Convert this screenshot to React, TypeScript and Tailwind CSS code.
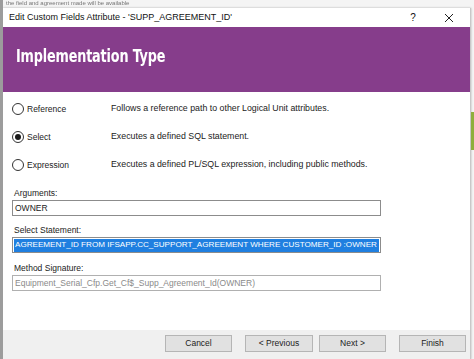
import React from "react";

const rows = [
  { label: "Reference", desc: "Follows a reference path to other Logical Unit attributes.", checked: false },
  { label: "Select", desc: "Executes a defined SQL statement.", checked: true },
  { label: "Expression", desc: "Executes a defined PL/SQL expression, including public methods.", checked: false },
];

function Radio({ checked }: { checked: boolean }) {
  return (
    <span className="w-[12px] h-[12px] rounded-full border border-[#333] bg-white flex items-center justify-center shrink-0">
      {checked && <span className="w-[6px] h-[6px] rounded-full bg-[#1a1a1a]" />}
    </span>
  );
}

function Btn({ children, className = "" }: { children: React.ReactNode; className?: string }) {
  return (
    <div
      className={
        "h-[17px] flex items-center justify-center bg-[#e1e1e1] border border-[#b5b5b5] text-[8.5px] text-[#222] " +
        className
      }
    >
      {children}
    </div>
  );
}

export default function App() {
  return (
    <div
      className="w-[474px] h-[359px] overflow-hidden bg-[#f4f4f4] relative"
      style={{ fontFamily: "'Liberation Sans', Arial, sans-serif" }}
    >
      {/* blurred text of the window behind */}
      <div className="absolute left-[6px] top-0 text-[6px] leading-[7px] text-[#777] blur-[0.5px]">
        the field and agreement made will be available
      </div>
      <div className="absolute left-0 top-0 w-[3px] h-[359px] bg-[#9c9c9c]" />
      <div className="absolute right-0 top-[112px] w-[3px] h-[38px] bg-[#8fae3c]" />

      <div className="ml-[3px] mt-[8px] w-[468px] h-[351px] flex flex-col border-r border-[#c8c8c8] shadow-[0_0_2px_rgba(0,0,0,0.3)]">
        {/* title bar */}
        <div className="h-[19px] bg-white flex items-center pl-[6px] text-[9px] text-[#111]">
          <span className="flex-1">Edit Custom Fields Attribute - 'SUPP_AGREEMENT_ID'</span>
          <span className="w-[10px] text-center mr-[26px] text-[10px]">?</span>
          <svg width="10" height="10" viewBox="0 0 10 10" className="mr-[16px]">
            <path d="M1 1 L9 9 M9 1 L1 9" stroke="#222" strokeWidth="1" />
          </svg>
        </div>

        {/* header */}
        <div className="h-[65px] bg-[#863d8b] flex items-center pl-[13px] pb-[8px]">
          <span
            className="inline-block origin-left scale-x-[0.79] text-white font-bold text-[18px] tracking-[-0.2px]"
            style={{ fontFamily: "'DejaVu Sans Condensed', 'Liberation Sans', sans-serif" }}
          >
            Implementation Type
          </span>
        </div>

        {/* body */}
        <div className="flex-1 bg-white pt-[9px] pl-[9px] text-[8.5px] text-[#222]">
          <div className="flex flex-col gap-[12px]">
            {rows.map((r) => (
              <div key={r.label} className="h-[16px] flex items-center">
                <Radio checked={r.checked} />
                <span className="ml-[3px] w-[84px]">{r.label}</span>
                <span className="text-[8.8px]">{r.desc}</span>
              </div>
            ))}
          </div>

          <div className="mt-[13px] h-[14px] flex items-center pl-[2px]">Arguments:</div>
          <div className="w-[369px] h-[16px] border border-[#8c8c8c] flex items-center pl-[2px]">OWNER</div>

          <div className="mt-[7px] h-[14px] flex items-center pl-[2px]">Select Statement:</div>
          <div className="w-[369px] h-[16px] border border-[#8c8c8c] flex items-center px-[1px] overflow-hidden">
            <span className="bg-[#1f7fe0] text-white whitespace-nowrap pl-[1px] h-[13px] flex items-center w-full text-[8.1px]">
              AGREEMENT_ID FROM IFSAPP.CC_SUPPORT_AGREEMENT WHERE CUSTOMER_ID :OWNER
            </span>
          </div>

          <div className="mt-[8px] h-[14px] flex items-center pl-[2px]">Method Signature:</div>
          <div className="w-[369px] h-[16px] border border-[#b0b0b0] flex items-center pl-[2px] text-[#8a8a8a]">
            Equipment_Serial_Cfp.Get_Cf$_Supp_Agreement_Id(OWNER)
          </div>
        </div>

        {/* footer */}
        <div className="h-[29px] bg-[#f0f0f0] flex items-start pt-[5px]">
          <Btn className="ml-[162px] w-[67px]">Cancel</Btn>
          <Btn className="ml-[13px] w-[68px]">&lt; Previous</Btn>
          <Btn className="ml-[6px] w-[67px]">Next &gt;</Btn>
          <Btn className="ml-[13px] w-[67px]">Finish</Btn>
        </div>
      </div>
    </div>
  );
}
